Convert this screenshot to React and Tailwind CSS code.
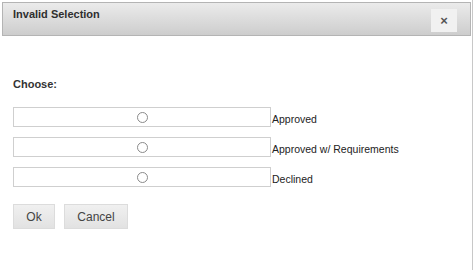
import React, { useState } from "react";

const options = ["Approved", "Approved w/ Requirements", "Declined"];

export default function App() {
  const [choice, setChoice] = useState(null);

  return (
    <div
      className="w-[474px] h-[270px] bg-white relative overflow-hidden"
      style={{ fontFamily: '"Liberation Sans", Arial, sans-serif' }}
    >
      <div className="w-[473px] h-[270px] pt-[2px] pl-[2px] border-r border-[#c8c8c8]">
        <div className="h-[34px] w-[469px] border border-[#b4b4b4] bg-gradient-to-b from-[#ebebeb] to-[#cdcdcd] flex items-center justify-between pl-[10px] pr-[13px]">
          <span className="text-[11px] font-bold text-[#2f2f2f] -mt-[9px]">Invalid Selection</span>
          <button className="w-[26px] h-[23px] mt-[2px] bg-[#f1f1f1] flex items-center justify-center text-[#555] text-[13px] font-bold leading-none">
            ×
          </button>
        </div>

        <div className="pl-[11px] pt-[42px]">
          <div className="text-[11px] font-bold text-[#333] leading-[12px]">Choose:</div>

          <div className="mt-[17px] flex flex-col gap-[10px]">
            {options.map((opt, i) => (
              <div key={opt} className="flex items-center h-[20px]">
                <label className="w-[258px] h-[20px] border border-[#cfcfcf] flex items-center justify-center">
                  <input
                    type="radio"
                    name="choice"
                    checked={choice === i}
                    onChange={() => setChoice(i)}
                    className="appearance-none w-[11px] h-[11px] rounded-full border border-[#8a8a8a] bg-white checked:bg-[#555] checked:ring-2 checked:ring-inset checked:ring-white"
                  />
                </label>
                <span className="text-[10.5px] text-[#222] ml-[1px] mt-[6px]">{opt}</span>
              </div>
            ))}
          </div>

          <div className="mt-[17px] flex gap-[9px]">
            <button className="w-[42px] h-[25px] bg-gradient-to-b from-[#f0f0f0] to-[#e2e2e2] border border-[#dcdcdc] text-[12px] text-[#444]">
              Ok
            </button>
            <button className="w-[64px] h-[25px] bg-gradient-to-b from-[#f0f0f0] to-[#e2e2e2] border border-[#dcdcdc] text-[12px] text-[#444]">
              Cancel
            </button>
          </div>
        </div>
      </div>
    </div>
  );
}
